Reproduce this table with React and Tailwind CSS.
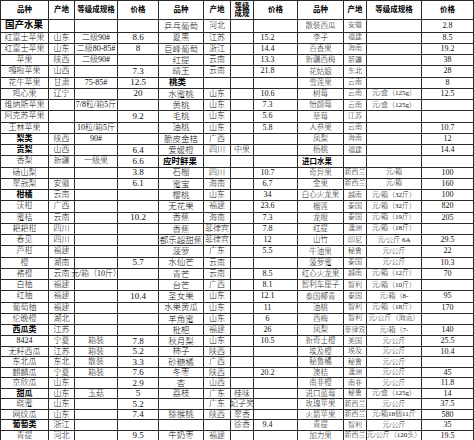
import React from "react";

const GRID =
  "grid grid-cols-[49px_26px_43px_41px_45px_27px_23px_44px_46px_23px_55px_52px]";

// per-column text classes
const COL = [
  "text-[8px]",
  "text-[8px]",
  "text-[8px]",
  "text-[9px]",
  "text-[8.5px]",
  "text-[8px]",
  "text-[8px]",
  "text-[8px] pr-[16px]",
  "text-[7.5px]",
  "text-[7px]",
  "text-[7px]",
  "text-[8px]",
];

const HEAD = ["品种", "产地", "等级成规格", "价格", "品种", "产地", "等级|成规", "价格", "品种", "产地", "等级成规格", "价格"];

const ROWS = [
  ["<*国产水果", "", "", "", "乒乓葡萄", "河北", "", "", "散装西瓜", "安徽", "", "2.8"],
  ["红富士苹果", "山东", "二级90#", "8.6", "夏黑", "江苏", "", "15.2", "李子", "福建", "", "8.5"],
  ["红富士苹果", "山东", "二级80-85#", "8", "巨峰葡萄", "浙江", "", "14.4", "百香果", "海南", "", "19.2"],
  ["苹果", "陕西", "二级90#", "", "红提", "云南", "", "13.3", "新疆西梅", "新疆", "", "38"],
  ["嘎啦苹果", "山西", "", "7.3", "晴王", "云南", "", "21.8", "花姑娘", "东北", "", "28"],
  ["花牛苹果", "甘肃", "75-85#", "12.5", "^*桃类", "", "", "", "雪莲果", "云南", "", "8"],
  ["鸡心果", "辽宁", "", "20", "水蜜桃", "山东", "", "10.6", "树莓", "云南", "元/盒（125g）", "12.5"],
  ["维纳斯苹果", "", "7/8粒/箱5斤", "", "黄桃", "山东", "", "7.3", "怡颜莓", "云南", "元/盒（125g）", ""],
  ["阿克苏苹果", "", "", "9.2", "毛桃", "山东", "", "5.6", "草莓", "江苏", "", ""],
  ["王林苹果", "", "10粒/箱5斤", "", "油桃", "山东", "", "5.8", "人参果", "云南", "", "10.7"],
  ["*梨类", "陕西", "90#", "", "脆皮金桔", "广西", "", "", "凤梨", "海南", "", "12"],
  ["*贡梨", "山西", "", "6.4", "爱媛橙", "四川", "中果", "", "杨桃", "福建", "", "14.4"],
  ["香梨", "新疆", "一级果", "6.6", "<*应时鲜果", "", "", "", "<*进口水果", "", "", ""],
  ["砀山梨", "", "", "3.8", "石榴", "四川", "", "10.7", "奇异果", "新西兰", "元/箱", "100"],
  ["翠冠梨", "安徽", "", "6.1", "蜜宝", "海南", "", "6.7", "金果", "新西兰", "元/箱", "160"],
  ["*柑橘", "云南", "", "", "樱桃", "山东", "", "34", "白心火龙果", "越南", "元/箱（32斤）", "100"],
  ["沃柑", "广西", "", "", "无花果", "福建", "", "23.6", "榴莲", "泰国", "元/箱（32斤）", "820"],
  ["蜜桔", "云南", "", "10.2", "香蕉", "海南", "", "7.3", "龙眼", "泰国", "元/箱（19斤）", "205"],
  ["耙耙柑", "四川", "", "", "香蕉", "菲律宾", "", "7.8", "红提", "澳洲", "元/箱（18斤）", ""],
  ["春见", "四川", "", "", "都乐超甜蕉", "菲律宾", "", "12", "山竹", "印尼", "元/公斤 6A", "29.5"],
  ["芦柑", "福建", "", "", "菠萝", "广东", "", "5.5", "牛油果", "秘鲁", "元/公斤", "22"],
  ["橙", "湖南", "", "5.7", "水仙芒", "云南", "", "", "菠萝蜜", "泰国", "元/公斤", "10.3"],
  ["褚橙", "云南", "元/箱（10斤）", "", "青芒", "云南", "", "8.5", "红心火龙果", "越南", "元/箱（12斤）", "70"],
  ["白柚", "福建", "", "", "台芒", "广西", "", "8.1", "智利车厘子", "智利", "元/箱（10斤）", ""],
  ["红柚", "福建", "", "10.4", "圣女果", "山东", "", "12.1", "泰国椰青", "泰国", "元/箱（8-", "95"],
  ["葡萄柚", "福建", "", "", "水果黄瓜", "山东", "", "11", "油桃", "智利", "元/箱（18斤）", "170"],
  ["伦晚橙", "湖北", "", "", "羊角蜜", "山东", "", "6", "西梅", "智利", "元/公斤（海运）", ""],
  ["*西瓜类", "江苏", "", "", "枇杷", "福建", "", "26", "凤梨", "菲律宾", "元/箱（7-", "140"],
  ["8424", "宁夏", "箱装", "7.8", "秋月梨", "山东", "", "10.5", "新奇士橙", "美国", "元/公斤", "25.5"],
  ["无籽西瓜", "江苏", "箱装", "5.2", "柿子", "陕西", "", "", "埃及橙", "埃及", "元/公斤", "10.4"],
  ["东北瓜", "东北", "散装", "3.3", "砂糖橘", "广西", "", "", "秘鲁橘", "秘鲁", "元/公斤", ""],
  ["麒麟瓜", "宁夏", "箱装", "7.6", "冬枣", "陕西", "", "20.2", "澳桔", "澳洲", "元/公斤", "45"],
  ["京欣瓜", "山东", "", "2.9", "杏", "山西", "", "", "南非橙", "南非", "元/公斤", "11.8"],
  ["*甜瓜", "山东", "玉菇", "5", "荔枝", "广东", "桂味", "", "进口蓝莓", "秘鲁", "元/盒（125g）", "14"],
  ["晓蜜", "山东", "", "5.2", "", "广东", "妃子笑", "", "玫瑰苹果", "新西兰", "元/公斤", "37.5"],
  ["网纹瓜", "山东", "", "7.4", "猕猴桃", "陕西", "翠香", "", "火箭苹果", "新西兰", "元/箱16個11斤", "580"],
  ["*葡萄类", "浙江", "", "", "", "", "徐香", "9.4", "青提", "智利", "元/公斤", "35"],
  ["青提", "河北", "", "9.5", "牛奶枣", "福建", "", "", "加力果", "新西兰", "元/公斤（120头）", "19.5"],
];

function parse(text) {
  let t = text;
  let bold = false;
  let left = false;
  let indent = false;
  while (t.length && "<*^".includes(t[0])) {
    if (t[0] === "<") left = true;
    if (t[0] === "*") bold = true;
    if (t[0] === "^") indent = true;
    t = t.slice(1);
  }
  return { t, bold, left, indent };
}

function Cell({ text, col, head }) {
  const { t, bold, left, indent } = parse(text);
  const big = t === "国产水果";
  const align = left ? "justify-start pl-[4px]" : indent ? "justify-start pl-[10px]" : "justify-center";
  const size = head ? "text-[7.5px]" : big ? "text-[9.5px]" : COL[col];
  return (
    <div
      className={`flex items-center ${align} whitespace-nowrap overflow-visible border-r border-b border-[#2a2a2a] leading-none ${size} ${
        col === 0 ? "border-l" : ""
      } ${bold || head ? "font-bold text-black" : "font-light text-[#111]"}`}
    >
      {head && t.includes("|") ? (
        <div className="flex flex-col items-center leading-[7.5px]">
          {t.split("|").map((s) => (
            <span key={s}>{s}</span>
          ))}
        </div>
      ) : (
        <span>{t}</span>
      )}
    </div>
  );
}

function rowHeight(i) {
  if (i === 0) return "h-[12.5px]";
  if (i <= 27) return "h-[11.25px]";
  return "h-[10.5px]";
}

export default function App() {
  return (
    <div className="w-[474px] h-[440px] overflow-hidden bg-white font-['Liberation_Serif','Noto_Sans_CJK_SC',sans-serif]">
      <div className={`${GRID} h-[20px] border-t border-[#2a2a2a]`}>
        {HEAD.map((h, c) => (
          <Cell key={c} text={h} col={c} head />
        ))}
      </div>
      {ROWS.map((r, i) => (
        <div key={i} className={`${GRID} ${rowHeight(i)}`}>
          {r.map((txt, c) => (
            <Cell key={c} text={txt} col={c} />
          ))}
        </div>
      ))}
    </div>
  );
}
